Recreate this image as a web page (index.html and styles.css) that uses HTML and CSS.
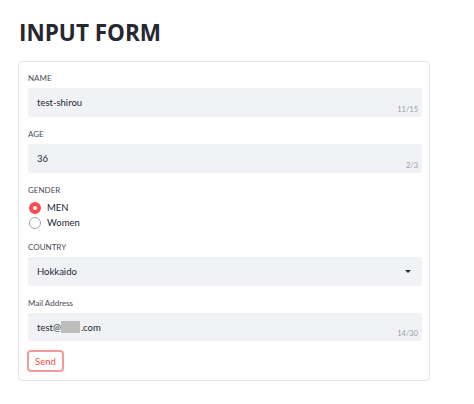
FILE: index.html
```html
<!DOCTYPE html>
<html>
<head>
<meta charset="utf-8">
<link rel="stylesheet" href="styles.css">
</head>
<body>
<main class="page">
  <h1 class="title">INPUT FORM</h1>
  <form class="form">
    <div class="field">
      <div class="label">NAME</div>
      <div class="input"><span class="value">test-shirou</span><span class="count">11/15</span></div>
    </div>
    <div class="field">
      <div class="label">AGE</div>
      <div class="input"><span class="value">36</span><span class="count">2/3</span></div>
    </div>
    <div class="field">
      <div class="label">GENDER</div>
      <div class="radios">
        <div class="radio"><span class="dot on"></span><span>MEN</span></div>
        <div class="radio"><span class="dot"></span><span>Women</span></div>
      </div>
    </div>
    <div class="field">
      <div class="label">COUNTRY</div>
      <div class="input select"><span class="value">Hokkaido</span><span class="arrow"></span></div>
    </div>
    <div class="field">
      <div class="label">Mail Address</div>
      <div class="input"><span class="value">test@<span class="redact"></span>.com</span><span class="count">14/30</span></div>
    </div>
    <div class="actions">
      <button type="button" class="send">Send</button>
    </div>
  </form>
</main>
</body>
</html>
```

FILE: styles.css
```css
* { box-sizing: border-box; }
html, body { margin: 0; padding: 0; background: #fff; }
body {
  font-family: "Lato", "Open Sans", sans-serif;
  color: #31333f;
}
.page {
  width: 474px;
  height: 404px;
  padding: 19px 0 0 18px;
}
.title {
  margin: 0 0 0 1px;
  font-family: "Open Sans", sans-serif;
  font-weight: 700;
  font-size: 22.5px;
  line-height: 28px;
  height: 42px;
  color: #262730;
}
.form {
  width: 412px;
  border: 1px solid #e4e5e9;
  border-radius: 4px;
  padding: 8px 7px 8px 9px;
}
.field { margin-bottom: 9px; }
.label {
  font-size: 8px;
  line-height: 14px;
  height: 14px;
  margin-bottom: 4px;
  padding-top: 1px;
  color: #4a4c56;
}
.input {
  height: 29px;
  background: #f0f2f6;
  border-radius: 3px;
  display: flex;
  align-items: center;
  padding: 0 4px 0 9px;
  font-size: 9.5px;
  color: #262730;
}
.value { flex: 1; display: flex; align-items: center; }
.count {
  align-self: flex-end;
  font-size: 7.5px;
  line-height: 10px;
  margin-bottom: 2px;
  color: #9a9ba2;
}
.redact {
  display: inline-block;
  width: 19px;
  height: 12px;
  background: #bdbdbd;
  margin: 0 1px 0 0;
}
.select { padding-right: 11px; }
.arrow {
  width: 0;
  height: 0;
  border-left: 3px solid transparent;
  border-right: 3px solid transparent;
  border-top: 3px solid #262730;
}
.radios { margin-bottom: 3px; }
.radio {
  display: flex;
  align-items: center;
  height: 15px;
  gap: 6px;
  font-size: 9.5px;
  color: #262730;
}
.dot {
  width: 12px;
  height: 12px;
  border-radius: 50%;
  border: 1px solid #a3a4aa;
  background: #fff;
  display: inline-block;
  margin-left: 1px;
}
.dot.on {
  border: 4px solid #ff4b4b;
  background: #fff;
}
.actions { display: flex; }
.send {
  width: 37px;
  height: 22px;
  padding: 0;
  background: #fff;
  border: 2px solid #f59a9a;
  border-radius: 4px;
  color: #ff4b4b;
  font-family: "Lato", sans-serif;
  font-size: 9.5px;
  margin-left: -1px;
}
.field:nth-last-child(2) .input { height: 28px; }
```
